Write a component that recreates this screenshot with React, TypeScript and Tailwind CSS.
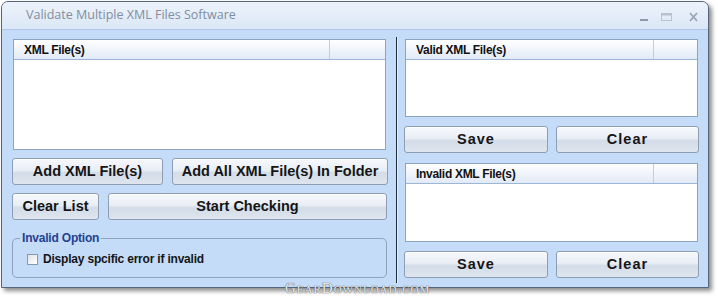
import React from "react";

const ui = { fontFamily: '"Liberation Sans", Arial, sans-serif' };

const Btn: React.FC<{ label: string; className?: string; wide?: boolean }> = ({ label, className = "", wide }) => (
  <button
    style={ui}
    className={`h-[27px] flex items-center justify-center rounded-[3px] border border-[#8d9db3] bg-[linear-gradient(to_bottom,#f6f8fb_0%,#e9eef5_45%,#d3dce8_55%,#dee5ee_100%)] text-[14.5px] font-bold text-[#151515] shadow-[inset_0_1px_0_#ffffff] ${wide ? "tracking-[1px]" : ""} ${className}`}
  >
    {label}
  </button>
);

const ListBox: React.FC<{ title: string; className?: string; sep: string }> = ({ title, className = "", sep }) => (
  <div className={`flex flex-col border border-[#8ea3bd] bg-white ${className}`}>
    <div className="flex h-[20px] items-stretch border-b border-[#9cb6d8] bg-[linear-gradient(to_bottom,#ffffff,#e2eaf6)]">
      <div
        style={ui}
        className={`flex items-center pl-[10px] text-[12px] font-bold tracking-[-0.3px] text-[#111] border-r border-[#c3cdda] ${sep}`}
      >
        {title}
      </div>
    </div>
  </div>
);

export default function App() {
  return (
    <div className="relative h-[296px] w-[718px] overflow-hidden bg-white">
      <div className="ml-[1px] mt-[1px] flex h-[287px] w-[708px] flex-col rounded-t-[7px] border border-[#56657a] bg-[#c5dcf8] shadow-[3px_3px_4px_rgba(0,0,0,0.45)]">
        {/* Title bar */}
        <div className="flex h-[28px] items-center rounded-t-[6px] border-b border-[#aec7e6] bg-[linear-gradient(to_bottom,#edf3fb,#dbe7f6)] pl-[24px] pr-[6px]">
          <span style={{ fontFamily: '"Open Sans", "Noto Sans", sans-serif' }} className="text-[12.5px] text-[#7f8ea0]">
            Validate Multiple XML Files Software
          </span>
          <div className="ml-auto flex items-center gap-[12px] pt-[2px]">
            <svg width="10" height="10" viewBox="0 0 10 10">
              <rect x="1" y="7" width="8" height="2" fill="#8d9aaa" />
            </svg>
            <svg width="11" height="10" viewBox="0 0 11 10">
              <rect x="0.5" y="1.5" width="10" height="7" fill="none" stroke="#b6c2d0" />
              <rect x="1" y="2" width="9" height="1.5" fill="#b6c2d0" />
            </svg>
            <svg width="16" height="10" viewBox="0 0 16 10" className="ml-[2px]">
              <path d="M4 1 L11 9 M11 1 L4 9" stroke="#97a6b6" strokeWidth="1.8" />
            </svg>
          </div>
        </div>

        {/* Client */}
        <div className="flex flex-1 pl-[10px] pt-[9px]">
          {/* Left column */}
          <div className="flex w-[376px] flex-col">
            <ListBox title="XML File(s)" sep="w-[316px]" className="ml-[1px] mr-[2px] h-[111px]" />
            <div className="mt-[8px] flex gap-[9px]">
              <Btn label="Add XML File(s)" className="w-[151px]" />
              <Btn label="Add All XML File(s) In Folder" className="w-[216px]" />
            </div>
            <div className="mt-[8px] flex gap-[9px]">
              <Btn label="Clear List" className="w-[87px]" />
              <Btn label="Start Checking" className="w-[279px]" />
            </div>
            <fieldset className="mt-[9px] mr-[1px] h-[49px] rounded-[5px] border border-[#8ea2bc] px-[14px] pt-0">
              <legend style={ui} className="ml-[-7px] px-[2px] text-[12px] font-bold tracking-[-0.2px] text-[#22428f]">
                Invalid Option
              </legend>
              <label style={ui} className="mt-[3px] flex items-center gap-[5px] text-[12px] font-bold tracking-[-0.2px] text-[#151515]">
                <span className="inline-block h-[11px] w-[11px] border border-[#8b99aa] bg-[linear-gradient(135deg,#dfe3e8,#ffffff)]" />
                Display spcific error if invalid
              </label>
            </fieldset>
          </div>

          {/* Divider */}
          <div className="ml-[8px] mt-[-2px] mb-[4px] flex w-[2px]">
            <div className="w-[1px] bg-[#1d2b3a]" />
            <div className="w-[1px] bg-[#e6f0fc]" />
          </div>

          {/* Right column */}
          <div className="ml-[6px] flex w-[295px] flex-col">
            <ListBox title="Valid XML File(s)" sep="w-[248px]" className="ml-[1px] mr-[1px] h-[78px]" />
            <div className="mt-[9px] flex gap-[8px]">
              <Btn label="Save" wide className="w-[144px]" />
              <Btn label="Clear" wide className="w-[143px]" />
            </div>
            <ListBox title="Invalid XML File(s)" sep="w-[248px]" className="ml-[1px] mr-[1px] mt-[10px] h-[79px]" />
            <div className="mt-[9px] flex gap-[8px]">
              <Btn label="Save" wide className="w-[144px]" />
              <Btn label="Clear" wide className="w-[143px]" />
            </div>
          </div>
        </div>
      </div>

      {/* Watermark */}
      <div
        style={{ fontFamily: '"Liberation Serif", serif', fontVariant: "small-caps", textShadow: "0 0 1px #555, 0 0 1px #555" }}
        className="absolute left-[285px] top-[281px] text-[15px] leading-none tracking-[1px] text-[#eeeeee]"
      >
        GearDownload.com
      </div>
    </div>
  );
}
